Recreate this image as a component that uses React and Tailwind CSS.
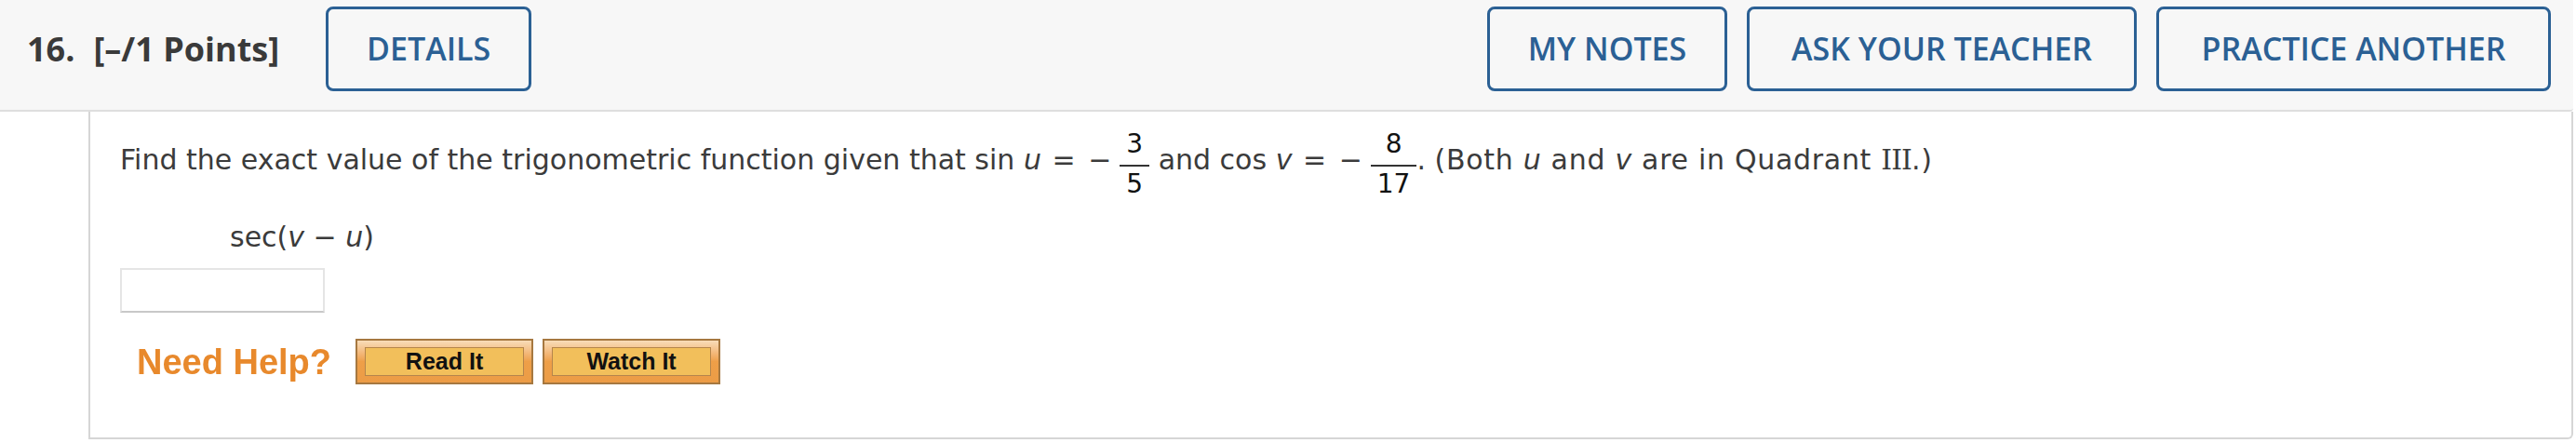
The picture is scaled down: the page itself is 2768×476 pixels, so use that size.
import React from 'react';

const HEADER_BUTTONS = [
  { label: 'MY NOTES', width: 'w-[258px]' },
  { label: 'ASK YOUR TEACHER', width: 'w-[419px]' },
  { label: 'PRACTICE ANOTHER', width: 'w-[424px]' },
];

function OutlineButton({ label, width }) {
  return (
    <button
      type="button"
      className={`${width} h-[91px] shrink-0 rounded-[8px] border-[3px] border-[#2b6094] text-[34px] font-semibold text-[#2b6094] font-['Open_Sans',sans-serif]`}
    >
      {label}
    </button>
  );
}

function Frac({ num, den }) {
  return (
    <span className="ml-[7px] inline-flex flex-col align-[18px] text-[28px] leading-none text-[#111]">
      <span className="px-[7px] pb-[8px] text-center">{num}</span>
      <span className="h-[2px] bg-[#333]" />
      <span className="px-[7px] pt-[5px] text-center">{den}</span>
    </span>
  );
}

// math operators get a touch more room, as in the original rendering
function Op({ children }) {
  return <span className="mx-[2px]">{children}</span>;
}

function HelpButton({ children }) {
  return (
    <button
      type="button"
      className="h-[49px] w-[191px] border-2 border-[#a67840] bg-gradient-to-b from-[#f8dcb8] via-[#ee9f48] to-[#ec9c46] px-[8px] py-[7px]"
    >
      <span className="flex h-full items-center justify-center border-[1.5px] border-[#b5854c] bg-[#f2bf5b] text-[25px] font-bold text-[#111] font-['Liberation_Sans',Arial,sans-serif]">
        {children}
      </span>
    </button>
  );
}

export default function App() {
  return (
    <div className="h-[476px] w-[2768px] bg-white">
      <div className="w-[2765px]">
        <header className="flex h-[120px] items-center border-b-2 border-[#dedede] bg-[#f7f7f7] pb-[20px] pl-[29px] pr-[24px] pt-[7px] rounded-br-[4px]">
          <h2 className="text-[36px] font-bold leading-none text-[#3a3a3a] font-['Open_Sans',sans-serif]">
            <span>16.</span>
            <span className="ml-[20px]">[–/1 Points]</span>
          </h2>
          <div className="ml-[50px]">
            <OutlineButton label="DETAILS" width="w-[221px]" />
          </div>
          <div className="ml-auto flex gap-[21px]">
            {HEADER_BUTTONS.map((b) => (
              <OutlineButton key={b.label} label={b.label} width={b.width} />
            ))}
          </div>
        </header>

        <section className="ml-[95px] h-[352px] rounded-br-[6px] border-b-2 border-l-2 border-r-2 border-[#d6d6d6] pl-[32px] pt-[21px] text-[30px] text-[#3b3b3b] font-['DejaVu_Sans',Verdana,sans-serif]">
          <p className="leading-[45px] whitespace-nowrap">
            Find the exact value of the trigonometric function given that sin <i>u</i> <Op>=</Op> <Op>−</Op>
            <Frac num="3" den="5" /> and cos <i>v</i> <Op>=</Op> <Op>−</Op>
            <Frac num="8" den="17" />.{' '}
            <span className="tracking-[0.7px]">
              (Both <i>u</i> and <i>v</i> are in Quadrant{' '}
              <span className="font-['DejaVu_Serif',serif] tracking-[-1px]">III</span>.)
            </span>
          </p>

          <p className="mt-[20px] pl-[118px] leading-[45px]">
            sec(<i>v</i> − <i>u</i>)
          </p>

          <input
            type="text"
            className="mt-[11px] block h-[48px] w-[220px] border-2 border-[#e5e5e5] border-b-[#c8c8c8] bg-white"
          />

          <div className="mt-[28px] flex items-center">
            <span className="ml-[18px] mr-[26px] text-[38px] font-bold leading-none text-[#e8892c] blur-[0.4px] font-['Liberation_Sans',Arial,sans-serif]">
              Need Help?
            </span>
            <div className="flex gap-[10px]">
              <HelpButton>Read It</HelpButton>
              <HelpButton>Watch It</HelpButton>
            </div>
          </div>
        </section>
      </div>
    </div>
  );
}
